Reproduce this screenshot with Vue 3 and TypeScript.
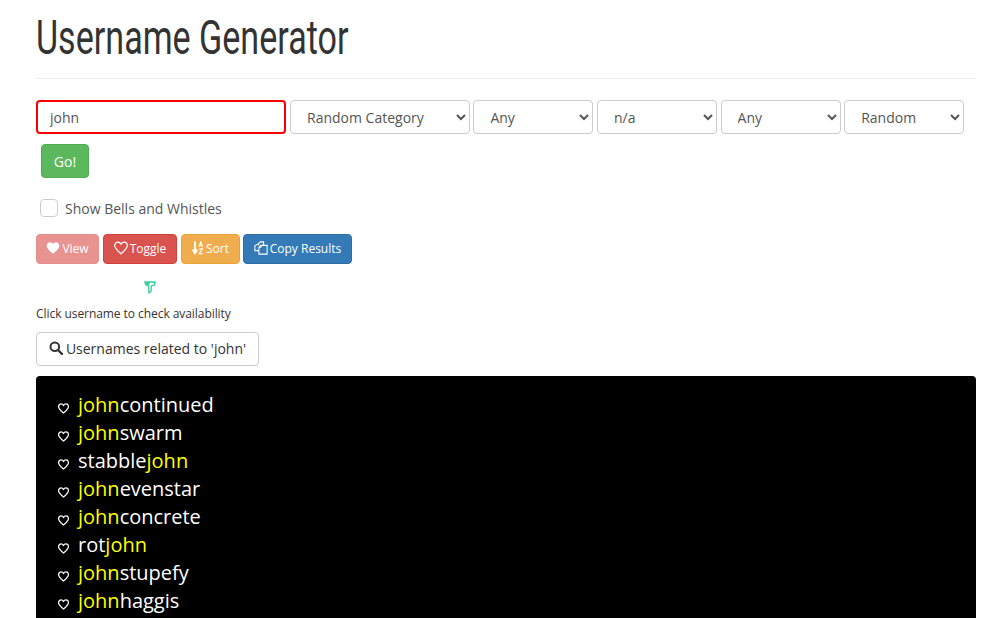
<script setup lang="ts">
const selects = [
  { label: 'Random Category', cls: 'w180' },
  { label: 'Any', cls: 'w120' },
  { label: 'n/a', cls: 'w120' },
  { label: 'Any', cls: 'w120' },
  { label: 'Random', cls: 'w120' }
]
const names: [string, string, string][] = [
  ['', 'john', 'continued'],
  ['', 'john', 'swarm'],
  ['stabble', 'john', ''],
  ['', 'john', 'evenstar'],
  ['', 'john', 'concrete'],
  ['rot', 'john', ''],
  ['', 'john', 'stupefy'],
  ['', 'john', 'haggis']
]
const heart = 'M8 14.5 C3 10.5 0.8 8.2 0.8 5.2 C0.8 2.9 2.6 1.4 4.6 1.4 C6 1.4 7.2 2.2 8 3.5 C8.8 2.2 10 1.4 11.4 1.4 C13.4 1.4 15.2 2.9 15.2 5.2 C15.2 8.2 13 10.5 8 14.5 Z'
</script>

<template>
  <div class="page">
    <h1 class="title"><span class="title-text">Username Generator</span></h1>
    <hr class="rule" />
    <form class="form" @submit.prevent>
      <input class="text" type="text" value="john" />
      <select v-for="(s, i) in selects" :key="i" class="sel" :class="s.cls">
        <option>{{ s.label }}</option>
      </select>
      <button class="btn go" type="button">Go!</button>
    </form>
    <label class="check">
      <span class="box"></span>
      <span class="check-text">Show Bells and Whistles</span>
    </label>
    <div class="actions">
      <button class="btn small view" type="button">
        <svg class="ic" viewBox="0 0 16 16"><path :d="heart" fill="#fff" /></svg>View
      </button>
      <button class="btn small toggle" type="button">
        <svg class="ic" viewBox="0 0 16 16"><path :d="heart" fill="none" stroke="#fff" stroke-width="1.4" /></svg>Toggle
      </button>
      <button class="btn small sort" type="button">
        <svg class="ic sort-ic" viewBox="0 0 14 16">
          <path d="M3.5 0.5 V13 M0.8 9.8 L3.5 14 L6.2 9.8" fill="none" stroke="#fff" stroke-width="2.2" />
          <path d="M8.2 6.6 L10.2 0.8 L12.2 6.6 M8.9 4.8 H11.5 M8.4 9 H12.1 L8.4 14.6 H12.4" fill="none" stroke="#fff" stroke-width="1.3" />
        </svg>Sort
      </button>
      <button class="btn small copy" type="button">
        <svg class="ic" viewBox="0 0 16 16">
          <path d="M5.2 5 V3 L7.2 1 H11 V5 M5.2 11 H1 V5.5 L5.2 3" fill="none" stroke="#fff" stroke-width="1.2" />
          <path d="M5.6 7.2 L8 5 H15 V15 H5.6 Z M8 5 V7.2 H5.6" fill="none" stroke="#fff" stroke-width="1.2" />
        </svg>Copy Results
      </button>
    </div>
    <div class="funnel">
      <svg width="12" height="13" viewBox="0 0 12 13">
        <path d="M0.8 1 H11.2 L10.4 3.8 L7.4 4.8 L7 10.5 L5 12 L4.6 5 L2 4 Z" fill="none" stroke="#2ecc9a" stroke-width="1.3" stroke-linejoin="round" />
        <path d="M1.6 1.6 H6 L4.8 4.4 L2.4 3.6 Z" fill="#2ecc9a" />
      </svg>
    </div>
    <p class="hint">Click username to check availability</p>
    <button class="btn related" type="button">
      <svg class="search" viewBox="0 0 14 14">
        <circle cx="5.8" cy="5.8" r="4.3" fill="none" stroke="#333" stroke-width="2" />
        <path d="M9 9 L13 13" stroke="#333" stroke-width="2.4" stroke-linecap="round" />
      </svg>Usernames related to 'john'
    </button>
    <ul class="results">
      <li v-for="(n, i) in names" :key="i" class="row">
        <svg class="row-heart" viewBox="0 0 16 16"><path :d="heart" fill="none" stroke="#fff" stroke-width="1.8" /></svg>
        <span>{{ n[0] }}<span class="hit">{{ n[1] }}</span>{{ n[2] }}</span>
      </li>
    </ul>
  </div>
</template>

<style>
html, body { margin: 0; height: 618px; overflow: hidden; background: #fff; }
</style>

<style scoped>
.page {
  box-sizing: border-box;
  width: 976px;
  padding-left: 36px;
  font-family: "Open Sans", sans-serif;
  font-size: 14px;
  color: #333;
}
.title {
  margin: 0;
  height: 78px;
  box-sizing: border-box;
  padding-top: 11px;
  font-family: Roboto, sans-serif;
  font-weight: 400;
  font-size: 48px;
  line-height: 54px;
  color: #333;
  white-space: nowrap;
}
.title-text {
  display: inline-block;
  transform: scaleX(0.71);
  transform-origin: 0 50%;
}
.rule {
  margin: 0 0 21px;
  border: 0;
  border-top: 1px solid #eee;
}
.form {
  display: flex;
  flex-wrap: wrap;
  align-items: flex-start;
  column-gap: 3.6px;
  row-gap: 10px;
}
.text {
  box-sizing: border-box;
  width: 250px;
  height: 34px;
  margin-right: 0.4px;
  padding: 0 12px;
  border: 2px solid #f00;
  border-radius: 4px;
  font: 14px "Open Sans", sans-serif;
  color: #555;
  outline: none;
}
.sel {
  box-sizing: border-box;
  height: 34px;
  padding: 0 12px;
  border: 1px solid #ccc;
  border-radius: 4px;
  background: #fff;
  font: 14px "Open Sans", sans-serif;
  color: #555;
}
.w180 { width: 180px; margin-right: -0.2px; }
.w120 { width: 120px; }
.btn {
  box-sizing: border-box;
  display: inline-flex;
  align-items: center;
  justify-content: center;
  border: 1px solid transparent;
  border-radius: 4px;
  font-family: "Open Sans", sans-serif;
  color: #fff;
  padding: 0;
}
.go {
  flex-basis: 48px;
  width: 48px;
  height: 34px;
  margin-left: 5px;
  background: #5cb85c;
  border-color: #4cae4c;
  font-size: 14px;
}
.check {
  display: flex;
  align-items: center;
  gap: 7px;
  margin: 21px 0 0 4px;
  height: 18px;
  line-height: 18px;
  font-size: 14px;
  color: #555;
}
.check-text { padding-top: 2px; }
.box {
  box-sizing: border-box;
  width: 18px;
  height: 18px;
  border: 1px solid #ccc;
  border-radius: 4px;
  background: #fff;
}
.actions {
  display: flex;
  gap: 4px;
  margin-top: 17px;
}
.small {
  height: 30px;
  padding-bottom: 2px;
  font-size: 12px;
  gap: 2px;
}
.ic { width: 14px; height: 14px; flex: none; }
.sort-ic { width: 12px; }
.view { width: 63px; background: #e99391; border-color: #e68f8c; }
.toggle { width: 74px; background: #d9534f; border-color: #d43f3a; }
.sort { width: 59px; background: #f0ad4e; border-color: #eea236; }
.copy { width: 109px; margin-left: -1px; background: #337ab7; border-color: #2e6da4; }
.funnel {
  height: 13px;
  margin: 17px 0 0 108px;
  line-height: 0;
}
.hint {
  margin: 12px 0 0;
  height: 16px;
  font-size: 12px;
  line-height: 16px;
  letter-spacing: -0.06px;
  color: #333;
}
.related {
  width: 223px;
  height: 34px;
  margin-top: 10px;
  padding-bottom: 2px;
  gap: 3px;
  background: #fff;
  border-color: #ccc;
  color: #333;
  font-size: 14px;
}
.search { width: 14px; height: 14px; }
.results {
  list-style: none;
  margin: 10px 0 0;
  padding: 15px 21px 15px 22px;
  width: 940px;
  box-sizing: border-box;
  background: #000;
  border-radius: 4px;
  color: #fff;
  font-size: 20px;
}
.row {
  display: flex;
  align-items: center;
  height: 28px;
  line-height: 28px;
}
.row-heart {
  width: 11px;
  height: 11px;
  margin-right: 9px;
  position: relative;
  top: 3px;
}
.hit { color: #ff0; }
</style>
